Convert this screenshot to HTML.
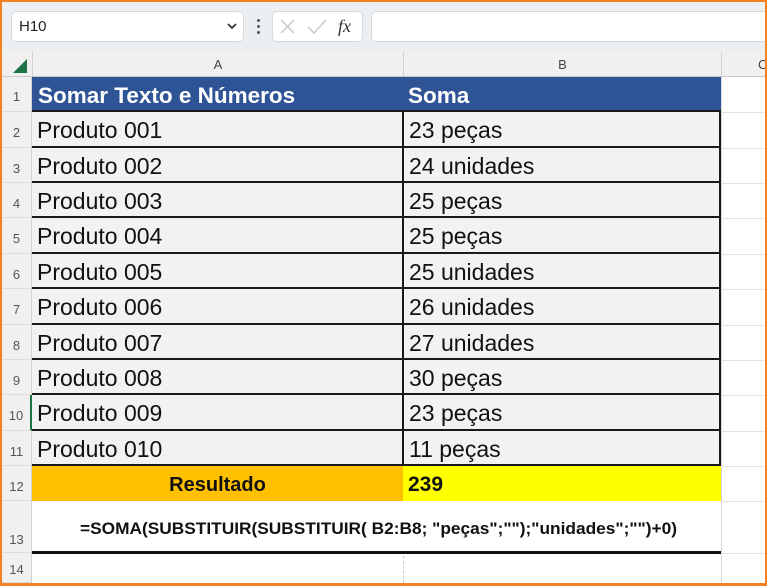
<!DOCTYPE html>
<html><head><meta charset="utf-8"><style>
*{margin:0;padding:0;box-sizing:border-box}
body{width:767px;height:586px;overflow:hidden;background:#fff;position:relative;font-family:"Liberation Sans",sans-serif}
.a{position:absolute}
.rh{position:absolute;left:2px;width:30px;background:#f0f0f0;color:#555;font-size:13px;text-align:center;border-bottom:1px solid #dcdcdc;border-right:1px solid #d0d0d0}
.c{position:absolute;background:#f2f2f2;color:#111;font-size:23px;padding-left:5px;line-height:36px;white-space:nowrap;border-bottom:2px solid #1a1a1a;border-right:2px solid #1a1a1a}
.gl{position:absolute;left:721px;width:44px;height:1px;background:#e2e2e2}
</style></head><body>
<div class="a" style="left:0;top:0;width:767px;height:52px;background:#eceff2"></div>
<div class="a" style="left:11px;top:11px;width:233px;height:31px;background:#fff;border:1px solid #d8d8d8;border-radius:5px;font-size:15px;line-height:29px;padding-left:7px;color:#222">H10</div>
<svg class="a" style="left:226px;top:21px" width="12" height="10"><path d="M2 3 L6 7 L10 3" stroke="#333" stroke-width="1.8" fill="none"/></svg>
<div class="a" style="left:257px;top:19px;width:3px;height:3px;background:#555;border-radius:2px"></div>
<div class="a" style="left:257px;top:25px;width:3px;height:3px;background:#555;border-radius:2px"></div>
<div class="a" style="left:257px;top:31px;width:3px;height:3px;background:#555;border-radius:2px"></div>
<div class="a" style="left:272px;top:11px;width:91px;height:31px;background:#fff;border:1px solid #d8d8d8;border-radius:5px"></div>
<svg class="a" style="left:278px;top:17px" width="80" height="20"><path d="M3 3 L16 16 M16 3 L3 16" stroke="#c8c8c8" stroke-width="1.5"/><path d="M30 10 L36 16 L48 3" stroke="#c8c8c8" stroke-width="1.5" fill="none"/><text x="60" y="15" font-family="Liberation Serif" font-style="italic" font-size="18" fill="#333">fx</text></svg>
<div class="a" style="left:371px;top:11px;width:400px;height:31px;background:#fff;border:1px solid #d8d8d8;border-radius:5px"></div>
<div class="a" style="left:2px;top:52px;width:765px;height:25px;background:#f0f0f0;border-bottom:1px solid #c8c8c8"></div>
<svg class="a" style="left:12px;top:58px" width="16" height="16"><path d="M15 1 L15 15 L1 15 Z" fill="#1e7145"/></svg>
<div class="a" style="left:32px;top:52px;width:371px;height:25px;border-left:1px solid #d0d0d0;text-align:center;font-size:13px;line-height:25px;color:#444">A</div>
<div class="a" style="left:403px;top:52px;width:318px;height:25px;border-left:1px solid #d0d0d0;text-align:center;font-size:13px;line-height:25px;color:#444">B</div>
<div class="a" style="left:721px;top:52px;width:46px;height:25px;border-left:1px solid #d0d0d0;padding-left:36px;font-size:13px;line-height:25px;color:#444">C</div>
<div class="rh" style="top:77px;height:35px;line-height:40px">1</div>
<div class="rh" style="top:112px;height:36px;line-height:42px">2</div>
<div class="rh" style="top:148px;height:35px;line-height:42px">3</div>
<div class="rh" style="top:183px;height:35px;line-height:42px">4</div>
<div class="rh" style="top:218px;height:36px;line-height:42px">5</div>
<div class="rh" style="top:254px;height:35px;line-height:42px">6</div>
<div class="rh" style="top:289px;height:36px;line-height:42px">7</div>
<div class="rh" style="top:325px;height:35px;line-height:42px">8</div>
<div class="rh" style="top:360px;height:35px;line-height:42px">9</div>
<div class="rh" style="top:395px;height:36px;line-height:42px;border-right:2px solid #1e7145">10</div>
<div class="rh" style="top:431px;height:35px;line-height:42px">11</div>
<div class="rh" style="top:466px;height:35px;line-height:42px">12</div>
<div class="rh" style="top:501px;height:52px;line-height:78px">13</div>
<div class="rh" style="top:553px;height:30px;line-height:34px">14</div>
<div class="a" style="left:32px;top:77px;width:689px;height:35px;background:#2f5496;border-bottom:2px solid #1a1a1a"></div>
<div class="a" style="left:38px;top:77px;color:#fff;font-weight:bold;font-size:22.5px;line-height:38px">Somar Texto e Números</div>
<div class="a" style="left:408px;top:77px;color:#fff;font-weight:bold;font-size:22.5px;line-height:38px">Soma</div>
<div class="c" style="left:32px;top:112px;width:372px;height:36px">Produto 001</div><div class="c" style="left:404px;top:112px;width:317px;height:36px">23 peças</div>
<div class="c" style="left:32px;top:148px;width:372px;height:35px">Produto 002</div><div class="c" style="left:404px;top:148px;width:317px;height:35px">24 unidades</div>
<div class="c" style="left:32px;top:183px;width:372px;height:35px">Produto 003</div><div class="c" style="left:404px;top:183px;width:317px;height:35px">25 peças</div>
<div class="c" style="left:32px;top:218px;width:372px;height:36px">Produto 004</div><div class="c" style="left:404px;top:218px;width:317px;height:36px">25 peças</div>
<div class="c" style="left:32px;top:254px;width:372px;height:35px">Produto 005</div><div class="c" style="left:404px;top:254px;width:317px;height:35px">25 unidades</div>
<div class="c" style="left:32px;top:289px;width:372px;height:36px">Produto 006</div><div class="c" style="left:404px;top:289px;width:317px;height:36px">26 unidades</div>
<div class="c" style="left:32px;top:325px;width:372px;height:35px">Produto 007</div><div class="c" style="left:404px;top:325px;width:317px;height:35px">27 unidades</div>
<div class="c" style="left:32px;top:360px;width:372px;height:35px">Produto 008</div><div class="c" style="left:404px;top:360px;width:317px;height:35px">30 peças</div>
<div class="c" style="left:32px;top:395px;width:372px;height:36px">Produto 009</div><div class="c" style="left:404px;top:395px;width:317px;height:36px">23 peças</div>
<div class="c" style="left:32px;top:431px;width:372px;height:35px">Produto 010</div><div class="c" style="left:404px;top:431px;width:317px;height:35px">11 peças</div>
<div class="a" style="left:32px;top:466px;width:371px;height:35px;background:#ffc000;text-align:center;font-weight:bold;font-size:20px;line-height:38px;color:#111">Resultado</div>
<div class="a" style="left:403px;top:466px;width:318px;height:35px;background:#ffff00;padding-left:5px;font-weight:bold;font-size:21px;line-height:38px;color:#111">239</div>
<svg class="a" style="left:32px;top:501px" width="690" height="52"><text x="48" y="33" textLength="597" lengthAdjust="spacingAndGlyphs" font-family="Liberation Sans" font-weight="bold" font-size="17" fill="#111">=SOMA(SUBSTITUIR(SUBSTITUIR( B2:B8; "peças";"");"unidades";"")+0)</text></svg>
<div class="a" style="left:32px;top:551px;width:689px;height:3px;background:#111"></div>
<div class="a" style="left:403px;top:556px;width:1px;height:27px;border-left:1px dashed #ccc"></div>
<div class="a" style="left:721px;top:77px;width:1px;height:506px;background:#d8d8d8"></div>
<div class="gl" style="top:112px"></div><div class="gl" style="top:148px"></div><div class="gl" style="top:183px"></div><div class="gl" style="top:218px"></div><div class="gl" style="top:254px"></div><div class="gl" style="top:289px"></div><div class="gl" style="top:325px"></div><div class="gl" style="top:360px"></div><div class="gl" style="top:395px"></div><div class="gl" style="top:431px"></div><div class="gl" style="top:466px"></div><div class="gl" style="top:501px"></div><div class="gl" style="top:553px"></div>
<div class="a" style="left:0;top:0;width:767px;height:586px;border:2px solid #f58220;border-bottom-width:3px"></div>
</body></html>
